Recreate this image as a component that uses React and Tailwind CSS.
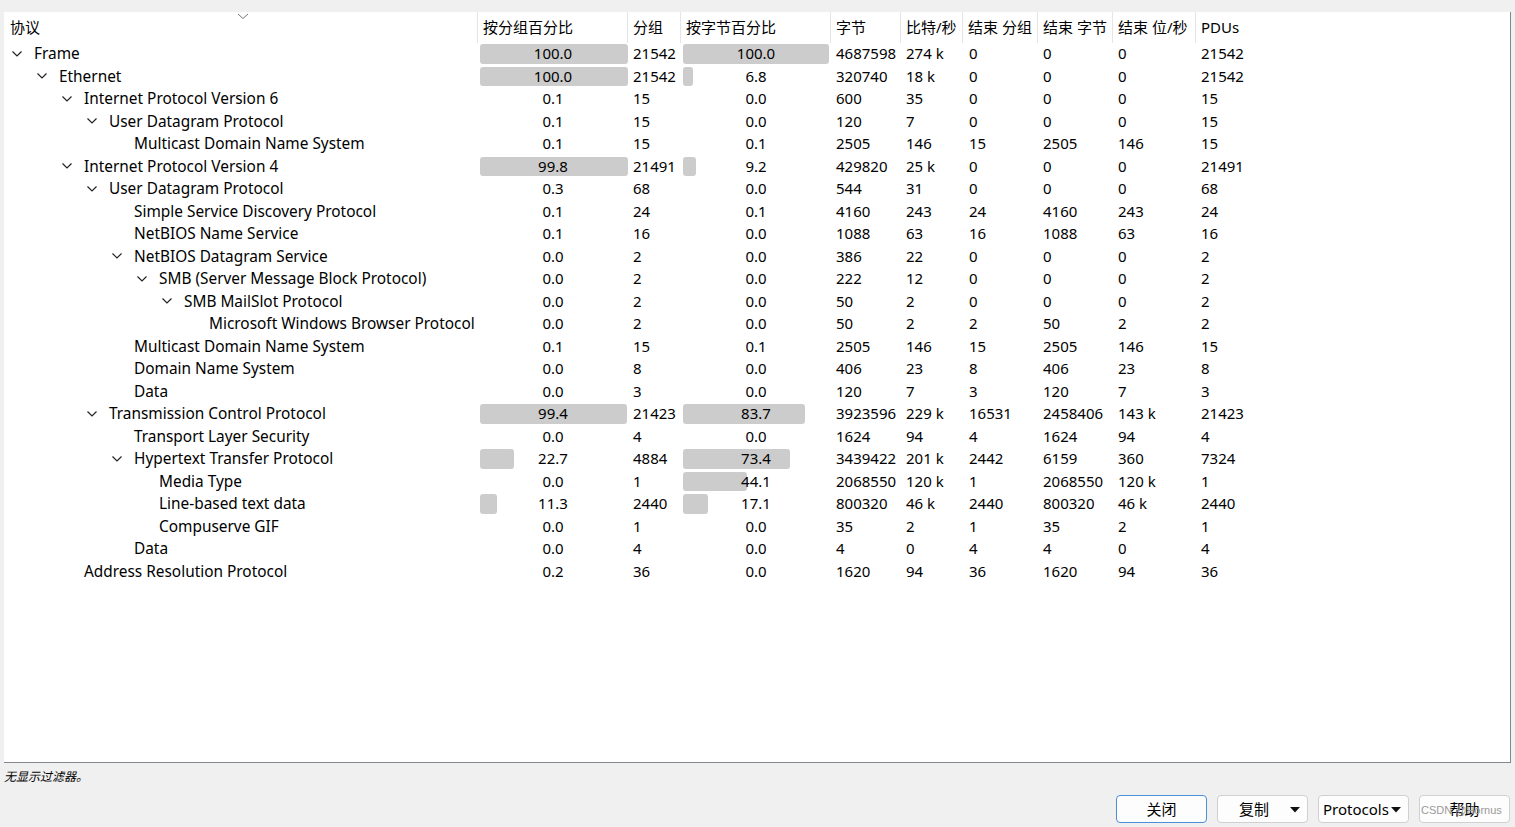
import React from "react";

const FONT = { fontFamily: '"Noto Sans", "Noto Sans CJK SC", sans-serif' };

const cols = [
  { key: "name", w: "w-[474px]" },
  { key: "pPct", w: "w-[150px]" },
  { key: "pkts", w: "w-[53px]" },
  { key: "bPct", w: "w-[150px]" },
  { key: "bytes", w: "w-[70px]" },
  { key: "bps", w: "w-[62px]" },
  { key: "ePkts", w: "w-[75px]" },
  { key: "eBytes", w: "w-[75px]" },
  { key: "eBps", w: "w-[83px]" },
  { key: "pdus", w: "w-[80px]" },
];

const headers = ["协议", "按分组百分比", "分组", "按字节百分比", "字节", "比特/秒", "结束 分组", "结束 字节", "结束 位/秒", "PDUs"];

// [level, open, name, pPct, pkts, bPct, bytes, bps, ePkts, eBytes, eBps, pdus]
const rows = [
  [0, true, "Frame", "100.0", "21542", "100.0", "4687598", "274 k", "0", "0", "0", "21542"],
  [1, true, "Ethernet", "100.0", "21542", "6.8", "320740", "18 k", "0", "0", "0", "21542"],
  [2, true, "Internet Protocol Version 6", "0.1", "15", "0.0", "600", "35", "0", "0", "0", "15"],
  [3, true, "User Datagram Protocol", "0.1", "15", "0.0", "120", "7", "0", "0", "0", "15"],
  [4, false, "Multicast Domain Name System", "0.1", "15", "0.1", "2505", "146", "15", "2505", "146", "15"],
  [2, true, "Internet Protocol Version 4", "99.8", "21491", "9.2", "429820", "25 k", "0", "0", "0", "21491"],
  [3, true, "User Datagram Protocol", "0.3", "68", "0.0", "544", "31", "0", "0", "0", "68"],
  [4, false, "Simple Service Discovery Protocol", "0.1", "24", "0.1", "4160", "243", "24", "4160", "243", "24"],
  [4, false, "NetBIOS Name Service", "0.1", "16", "0.0", "1088", "63", "16", "1088", "63", "16"],
  [4, true, "NetBIOS Datagram Service", "0.0", "2", "0.0", "386", "22", "0", "0", "0", "2"],
  [5, true, "SMB (Server Message Block Protocol)", "0.0", "2", "0.0", "222", "12", "0", "0", "0", "2"],
  [6, true, "SMB MailSlot Protocol", "0.0", "2", "0.0", "50", "2", "0", "0", "0", "2"],
  [7, false, "Microsoft Windows Browser Protocol", "0.0", "2", "0.0", "50", "2", "2", "50", "2", "2"],
  [4, false, "Multicast Domain Name System", "0.1", "15", "0.1", "2505", "146", "15", "2505", "146", "15"],
  [4, false, "Domain Name System", "0.0", "8", "0.0", "406", "23", "8", "406", "23", "8"],
  [4, false, "Data", "0.0", "3", "0.0", "120", "7", "3", "120", "7", "3"],
  [3, true, "Transmission Control Protocol", "99.4", "21423", "83.7", "3923596", "229 k", "16531", "2458406", "143 k", "21423"],
  [4, false, "Transport Layer Security", "0.0", "4", "0.0", "1624", "94", "4", "1624", "94", "4"],
  [4, true, "Hypertext Transfer Protocol", "22.7", "4884", "73.4", "3439422", "201 k", "2442", "6159", "360", "7324"],
  [5, false, "Media Type", "0.0", "1", "44.1", "2068550", "120 k", "1", "2068550", "120 k", "1"],
  [5, false, "Line-based text data", "11.3", "2440", "17.1", "800320", "46 k", "2440", "800320", "46 k", "2440"],
  [5, false, "Compuserve GIF", "0.0", "1", "0.0", "35", "2", "1", "35", "2", "1"],
  [4, false, "Data", "0.0", "4", "0.0", "4", "0", "4", "4", "0", "4"],
  [2, false, "Address Resolution Protocol", "0.2", "36", "0.0", "1620", "94", "36", "1620", "94", "36"],
];

function Chevron() {
  return (
    <svg width="10" height="6" viewBox="0 0 10 6" className="shrink-0">
      <path d="M0.5 0.5 L5 5 L9.5 0.5" fill="none" stroke="#222" strokeWidth="1.2" />
    </svg>
  );
}

function BarCell({ value, max }) {
  const w = Math.round((parseFloat(value) / 100) * max);
  return (
    <div className="relative w-[150px] h-full flex items-center justify-center">
      {w >= 1 && (
        <div className="absolute left-[2px] top-[1.5px] h-[19.5px] rounded-[3px] bg-[#cccccc]" style={{ width: w }} />
      )}
      <span className="relative">{value}</span>
    </div>
  );
}

function Row({ r }) {
  const [level, open, name, pPct, pkts, bPct, bytes, bps, ePkts, eBytes, eBps, pdus] = r;
  return (
    <div className="flex h-[22.5px] items-center text-[15px] text-black leading-none">
      <div className="w-[474px] flex items-center h-full">
        <div className="shrink-0" style={{ width: level * 25 }} />
        <div className="w-[30px] pl-[8px] flex items-center shrink-0">{open && <Chevron />}</div>
        <span className="whitespace-nowrap text-[15.4px]">{name}</span>
      </div>
      <BarCell value={pPct} max={148} />
      <div className="w-[53px] pl-[5px]">{pkts}</div>
      <BarCell value={bPct} max={146} />
      <div className="w-[70px] pl-[5px]">{bytes}</div>
      <div className="w-[62px] pl-[5px]">{bps}</div>
      <div className="w-[75px] pl-[6px]">{ePkts}</div>
      <div className="w-[75px] pl-[5px]">{eBytes}</div>
      <div className="w-[83px] pl-[5px]">{eBps}</div>
      <div className="w-[80px] pl-[5px]">{pdus}</div>
    </div>
  );
}

function Button({ children, focused, caret, className = "" }) {
  return (
    <div
      className={`relative h-[28px] w-[91px] rounded-[4px] bg-[#fdfdfd] flex items-center text-[15px] text-black ${
        focused ? "border border-[#4a90d9]" : "border border-[#d0d0d0]"
      } ${className}`}
    >
      {children}
      {caret && (
        <svg width="10" height="6" viewBox="0 0 10 6" className="absolute right-[7px] top-[11px]">
          <path d="M0 0 L10 0 L5 5.5 Z" fill="#111" />
        </svg>
      )}
    </div>
  );
}

export default function App() {
  return (
    <div className="w-[1515px] h-[827px] bg-[#f0f0f0] overflow-hidden" style={FONT}>
      <div className="pt-[12px] pl-[4px]">
        <div className="w-[1507px] h-[751px] bg-white border-r border-b border-[#828790]">
          <div className="relative flex h-[30.5px] items-center text-[15px] text-black">
            <svg width="12" height="7" viewBox="0 0 12 7" className="absolute left-[233px] top-[1px]">
              <path d="M1 1 L6 5.5 L11 1" fill="none" stroke="#777" strokeWidth="1" />
            </svg>
            {cols.map((c, i) => (
              <div
                key={c.key}
                className={`${c.w} h-full flex items-center ${i === 0 ? "pl-[6px]" : "pl-[5px]"} ${
                  i < cols.length - 1 ? "border-r border-[#e5e5e5]" : ""
                }`}
              >
                <span className="whitespace-nowrap">{headers[i]}</span>
              </div>
            ))}
          </div>
          {rows.map((r, i) => (
            <Row key={i} r={r} />
          ))}
        </div>
      </div>
      <div className="pl-[4px] pt-[8px] h-[20px] text-[12px] italic text-black leading-none">无显示过滤器。</div>
      <div className="flex justify-end gap-[10px] pr-[5px] pt-[12px]">
        <Button focused className="justify-center">关闭</Button>
        <Button caret className="pl-[21px]">复制</Button>
        <Button caret className="pl-[4px]">Protocols</Button>
        <Button className="justify-center">
          <span>帮助</span>
          <span className="absolute left-[1px] top-[9px] text-[11px] text-[#9a9a9a] leading-none whitespace-nowrap" style={{ fontFamily: '"Liberation Sans", sans-serif' }}>
            CSDN @Hornus
          </span>
        </Button>
      </div>
    </div>
  );
}
